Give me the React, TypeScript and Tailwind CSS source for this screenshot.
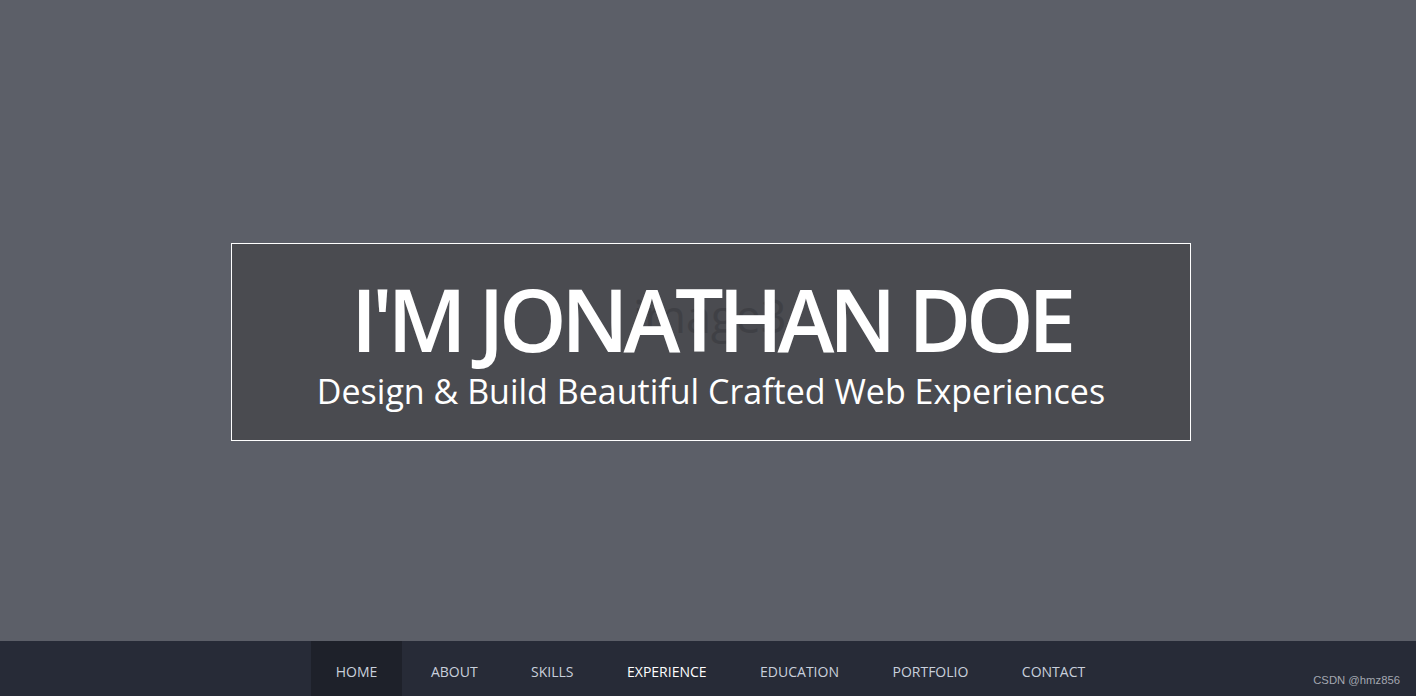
const navItems = [
  "HOME",
  "ABOUT",
  "SKILLS",
  "EXPERIENCE",
  "EDUCATION",
  "PORTFOLIO",
  "CONTACT",
];

function Hero() {
  return (
    <section className="h-[641px] bg-[#5c5f68] pt-[243px] pl-[6px] flex justify-center items-start">
      <div className="relative w-[960px] h-[198px] border border-white bg-[#4a4b50] pt-[32px] text-center text-white">
        <span className="absolute left-[401px] top-[49px] text-[45px] leading-[45px] text-[#3f4045] select-none">
          image3
        </span>
        <h1 className="relative text-[86px] leading-[86px] font-semibold tracking-[-5.3px]">
          I'M JONATHAN DOE
        </h1>
        <p className="relative mt-[11px] text-[34px] leading-[37px]">
          Design &amp; Build Beautiful Crafted Web Experiences
        </p>
      </div>
    </section>
  );
}

function NavBar() {
  return (
    <nav className="relative h-[55px] bg-[#272b37]">
      <ul className="flex justify-center gap-[3.5px] pl-[5px] h-full">
        {navItems.map((item) => (
          <li
            key={item}
            className={
              item === "HOME"
                ? "px-[25px] pt-[6px] flex items-center bg-[#1e212a] text-[#c9d0dc] text-[14px]"
                : item === "EXPERIENCE"
                ? "px-[25px] pt-[6px] flex items-center text-white text-[14px]"
                : "px-[25px] pt-[6px] flex items-center text-[#c9d0dc] text-[14px]"
            }
          >
            {item}
          </li>
        ))}
      </ul>
      <span className="absolute right-[16px] bottom-[7px] text-[11.3px] text-[#a3a7b0] font-['Liberation_Sans',sans-serif]">
        CSDN @hmz856
      </span>
    </nav>
  );
}

export default function App() {
  return (
    <div className="w-[1416px] h-[696px] overflow-hidden font-['Open_Sans',sans-serif]">
      <Hero />
      <NavBar />
    </div>
  );
}
